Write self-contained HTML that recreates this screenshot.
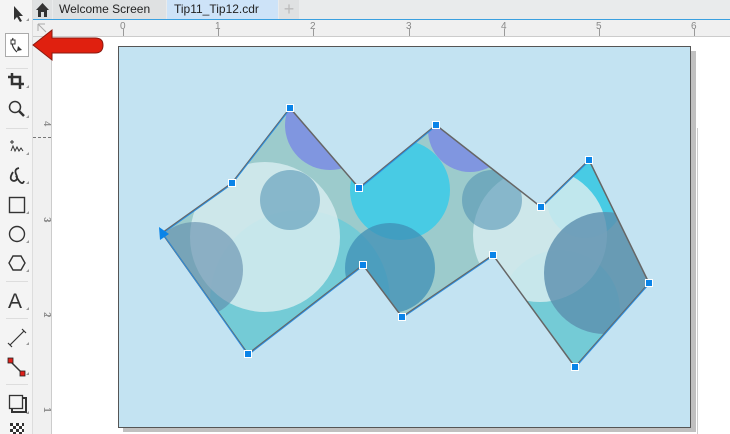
<!DOCTYPE html>
<html><head><style>
*{margin:0;padding:0;box-sizing:border-box}
body{width:730px;height:434px;overflow:hidden;background:#fff;font-family:"Liberation Sans",sans-serif;position:relative}
.abs{position:absolute}
</style></head><body>
<div class="abs" style="left:0;top:0;width:730px;height:19px;background:#e9ebec"></div>
<div class="abs" style="left:33px;top:19px;width:697px;height:1px;background:#3aa0e0"></div>
<div class="abs" style="left:33px;top:0;width:19px;height:19px;background:#dfe1e2"></div>
<svg class="abs" style="left:34px;top:1px" width="17" height="17"><path d="M2 9 L8.5 2 L15 9 L13 9 L13 16 L10 16 L10 11 L7 11 L7 16 L4 16 L4 9 Z" fill="#333"/></svg>
<div class="abs" style="left:53px;top:0;width:113px;height:19px;background:#dfe1e2;font-size:12px;line-height:18px;padding-left:6px;color:#222">Welcome Screen</div>
<div class="abs" style="left:167px;top:0;width:111px;height:19px;background:#cde3f8;font-size:12px;line-height:18px;padding-left:7px;color:#222">Tip11_Tip12.cdr</div>
<div class="abs" style="left:279px;top:0;width:20px;height:19px;background:#dfe1e2;color:#bbb;font-size:18px;line-height:18px;text-align:center">+</div>
<div class="abs" style="left:0;top:0;width:33px;height:434px;background:#f4f4f4;border-right:1px solid #ddd"></div>
<div class="abs" style="left:33px;top:20px;width:697px;height:17px;background:#f0f0f0;border-bottom:1px solid #ccc"></div>
<div class="abs" style="left:33px;top:37px;width:19px;height:397px;background:#f0f0f0;border-right:1px solid #ccc"></div>
<svg class="abs" style="left:0;top:0" width="730" height="434" font-family="Liberation Sans" font-size="10" fill="#888">
 <g stroke="#999" stroke-width="1">
  <line x1="123.5" y1="29" x2="123.5" y2="36"/><line x1="218.5" y1="29" x2="218.5" y2="36"/><line x1="313.5" y1="29" x2="313.5" y2="36"/><line x1="409.5" y1="29" x2="409.5" y2="36"/><line x1="504.5" y1="29" x2="504.5" y2="36"/><line x1="599.5" y1="29" x2="599.5" y2="36"/><line x1="694.5" y1="29" x2="694.5" y2="36"/>
  <line x1="44" y1="124.5" x2="51" y2="124.5"/><line x1="44" y1="220.5" x2="51" y2="220.5"/><line x1="44" y1="315.5" x2="51" y2="315.5"/><line x1="44" y1="410.5" x2="51" y2="410.5"/>
  <line x1="33" y1="137.5" x2="52" y2="137.5" stroke-dasharray="3,2" stroke="#777"/>
 </g>
 <text x="120" y="29">0</text><text x="215" y="29">1</text><text x="310" y="29">2</text><text x="406" y="29">3</text><text x="501" y="29">4</text><text x="596" y="29">5</text><text x="691" y="29">6</text>
 <text transform="translate(44,124) rotate(90)" x="-3" y="0">4</text>
 <text transform="translate(44,220) rotate(90)" x="-3" y="0">3</text>
 <text transform="translate(44,315) rotate(90)" x="-3" y="0">2</text>
 <text transform="translate(44,410) rotate(90)" x="-3" y="0">1</text>
 <path d="M38 24 L45 24 M38 24 L38 31 M38 24 L46 32" stroke="#aaa" fill="none"/>
</svg>
<div class="abs" style="left:123px;top:51px;width:573px;height:381px;background:#c0c0c0"></div>
<div class="abs" style="left:118px;top:46px;width:573px;height:382px;background:#c3e3f2;border:1px solid #555"></div>
<div class="abs" style="left:697px;top:128px;width:1px;height:306px;background:#ccc"></div>
<svg class="abs" style="left:0;top:0" width="730" height="434">
 <defs><clipPath id="c"><path d="M162 233 L232 183 L290 108 L359 188 L436 125 L541 207 L589 160 L649 283 L575 367 L493 255 L402 317 L363 265 L248 354 Z"/></clipPath></defs>
 <g clip-path="url(#c)">
  <rect x="150" y="100" width="510" height="280" fill="#9ccbcc"/>
  <circle cx="300" cy="300" r="90" fill="#74cbd6"/>
  <circle cx="560" cy="310" r="60" fill="#74cbd6"/>
  <circle cx="330" cy="125" r="45" fill="#8096e0"/>
  <circle cx="470" cy="130" r="42" fill="#8096e0"/>
  <circle cx="400" cy="190" r="50" fill="#48cbe4"/>
  <circle cx="585" cy="200" r="38" fill="#48cbe4"/>
  <circle cx="265" cy="237" r="75" fill="#d6ecee" opacity="0.85"/>
  <circle cx="540" cy="235" r="67" fill="#d6ecee" opacity="0.85"/>
  <circle cx="290" cy="200" r="30" fill="#4f8fb0" opacity="0.55"/>
  <circle cx="492" cy="200" r="30" fill="#4f8fb0" opacity="0.55"/>
  <circle cx="195" cy="270" r="48" fill="#5f8aaa" opacity="0.6"/>
  <circle cx="390" cy="268" r="45" fill="#3f8fb5" opacity="0.75"/>
  <circle cx="605" cy="273" r="61" fill="#5b8fae" opacity="0.8"/>
 </g>
 <path d="M162 233 L232 183 L290 108 L359 188 L436 125 L541 207 L589 160 L649 283 L575 367 L493 255 L402 317 L363 265 L248 354 Z" fill="none" stroke="#666" stroke-width="1.5"/>
 <path d="M162 234 L232 184 L290 109 M359 189 L436 126 M541 208 L589 161 M649 284 L575 368 M493 256 L402 318 M363 266 L248 355 L163 234" fill="none" stroke="#2a8ee0" stroke-width="1"/>
 <g fill="#0a84e8" stroke="#fff" stroke-width="1">
  <rect x="228.5" y="179.5" width="7" height="7"/><rect x="286.5" y="104.5" width="7" height="7"/><rect x="355.5" y="184.5" width="7" height="7"/><rect x="432.5" y="121.5" width="7" height="7"/><rect x="537.5" y="203.5" width="7" height="7"/><rect x="585.5" y="156.5" width="7" height="7"/><rect x="645.5" y="279.5" width="7" height="7"/><rect x="571.5" y="363.5" width="7" height="7"/><rect x="489.5" y="251.5" width="7" height="7"/><rect x="398.5" y="313.5" width="7" height="7"/><rect x="359.5" y="261.5" width="7" height="7"/><rect x="244.5" y="350.5" width="7" height="7"/>
 </g>
 <path d="M159 227 L169 234 L160 240 Z" fill="#0a84e8"/>
 <g fill="#333" stroke="#333">
  <path d="M14 6 L14 20 L17 17 L20 22 L22 21 L19 16 L23 16 Z" stroke="none"/>
  <path d="M26 21 L29 21 L29 18 Z" fill="#999" stroke="none"/>
  <rect x="5.5" y="33.5" width="23" height="23" fill="#fff" stroke="#aaa"/>
  <path d="M13 38 Q10 46 17 52" fill="none" stroke-width="1.2"/>
  <rect x="11" y="40" width="4" height="4" fill="#fff" stroke-width="1"/>
  <path d="M18 46 L22 50 L17 51 Z" stroke="none"/>
  <path d="M12 73 L12 84 L24 84 M8 77 L20 77 L20 89" fill="none" stroke-width="2.5"/>
  <circle cx="15" cy="107" r="5.5" fill="none" stroke-width="1.5"/><path d="M19 111 L24 116" stroke-width="2.5"/>
  <path d="M10 142 L14 142 M12 140 L12 144 M11 151 L13 146 L15 151 L17 147 L19 151 L21 148 L23 151" fill="none" stroke-width="1"/>
  <path d="M13 172 Q8 180 14 181 Q19 180 16 174 Q14 169 19 168 M16 176 Q22 187 24 181" fill="none" stroke-width="1.8"/>
  <rect x="9.5" y="197.5" width="15" height="15" fill="none" stroke-width="1.4"/>
  <circle cx="17" cy="234" r="7.5" fill="none" stroke-width="1.4"/>
  <path d="M13 256 L21 256 L25 263 L21 270 L13 270 L9 263 Z" fill="none" stroke-width="1.4"/>
  <text x="8" y="308" font-family="Liberation Sans" font-size="21" stroke="none">A</text>
  <path d="M10 345 L24 331 M8 343 L12 347 M22 329 L26 333" fill="none" stroke-width="1.2"/>
  <path d="M11 362 L22 373" stroke-width="1.5"/>
  <rect x="8" y="358" width="5" height="5" fill="#e0201a" stroke="#222" stroke-width="0.8"/>
  <rect x="20" y="371" width="5" height="5" fill="#e0201a" stroke="#222" stroke-width="0.8"/>
  <rect x="9.5" y="395.5" width="13" height="13" fill="none" stroke-width="1.3"/>
  <path d="M23 398 L26 398 L26 412 L12 412 L12 409" fill="none" stroke-width="2"/>
  <path d="M10 423 h14 v11 h-14 z" fill="#fff" stroke="none"/>
  <path d="M10 423h3v3h-3zM16 423h3v3h-3zM22 423h2v3h-2zM13 426h3v3h-3zM19 426h3v3h-3zM10 429h3v3h-3zM16 429h3v3h-3zM22 429h2v3h-2zM13 432h3v2h-3zM19 432h3v2h-3z" stroke="none"/>
  <g fill="#999" stroke="none">
   <path d="M26 88 L29 88 L29 85Z"/><path d="M26 118 L29 118 L29 115Z"/><path d="M26 155 L29 155 L29 152Z"/><path d="M26 184 L29 184 L29 181Z"/><path d="M26 214 L29 214 L29 211Z"/><path d="M26 243 L29 243 L29 240Z"/><path d="M26 272 L29 272 L29 269Z"/><path d="M26 310 L29 310 L29 307Z"/><path d="M26 345 L29 345 L29 342Z"/><path d="M26 375 L29 375 L29 372Z"/><path d="M26 414 L29 414 L29 411Z"/>
  </g>
  <g stroke="#ddd" stroke-width="1"><line x1="6" y1="68.5" x2="28" y2="68.5"/><line x1="6" y1="128.5" x2="28" y2="128.5"/><line x1="6" y1="281.5" x2="28" y2="281.5"/><line x1="6" y1="318.5" x2="28" y2="318.5"/><line x1="6" y1="384.5" x2="28" y2="384.5"/></g>
 </g>
 <path d="M33 45 L52 30 L52 38 L95 38 Q103 38 103 45 Q103 53 95 53 L52 53 L52 60 Z" fill="#e0200f" stroke="#8a1a10" stroke-width="1"/>
</svg>
</body></html>
